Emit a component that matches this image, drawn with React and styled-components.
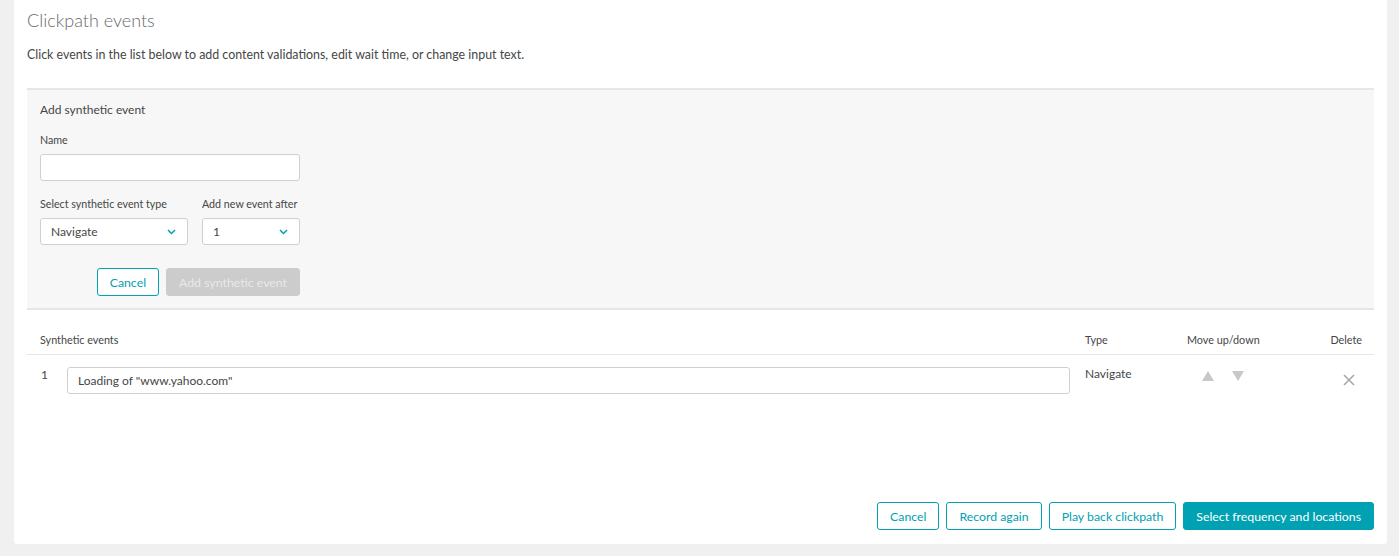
import React from "react";
import styled, { createGlobalStyle } from "styled-components";

const Global = createGlobalStyle`
  html, body {
    margin: 0;
    padding: 0;
    background: #f0f0f0;
    font-family: Lato, "Open Sans", sans-serif;
    color: #454646;
  }
  * { box-sizing: border-box; }
`;

const Card = styled.div`
  margin: 0 12px 0 14px;
  height: 544px;
  background: #fff;
  border-radius: 0 0 3px 3px;
  padding: 8px 13px 0 13px;
  display: flex;
  flex-direction: column;
`;

const Title = styled.h1`
  margin: 0;
  font-size: 18px;
  line-height: 24px;
  font-weight: 300;
  color: #6a6a6a;
`;

const Intro = styled.p`
  margin: 11px 0 0;
  font-size: 12.4px;
  line-height: 24px;
`;

const Panel = styled.div`
  margin-top: 21px;
  background: #f7f7f7;
  border-top: 2px solid #e6e6e6;
  border-bottom: 2px solid #e6e6e6;
  padding: 11px 13px 12px;
  height: 222px;
`;

const PanelTitle = styled.div`
  font-size: 12px;
  line-height: 18px;
`;

const Label = styled.label`
  display: block;
  font-size: 10.7px;
  line-height: 14px;
  margin: ${(p) => p.$top || 0}px 0 7px;
`;

const TextInput = styled.div`
  width: ${(p) => p.$w || 260}px;
  height: 27px;
  background: #fff;
  border: 1px solid #d0d0d0;
  border-radius: 3px;
  font-size: 12px;
  line-height: 25px;
  padding: 0 10px;
  color: #454646;
`;

const Row = styled.div`
  display: flex;
  gap: 14px;
  margin-top: 16px;
`;

const Select = styled.div`
  width: ${(p) => p.$w}px;
  height: 27px;
  background: #fff;
  border: 1px solid #d0d0d0;
  border-radius: 3px;
  font-size: 12px;
  display: flex;
  align-items: center;
  justify-content: space-between;
  padding: 0 11px 0 10px;
  svg { display: block; }
`;

const Actions = styled.div`
  display: flex;
  gap: 7px;
  justify-content: flex-end;
  width: ${(p) => p.$w || "auto"};
  margin-top: ${(p) => p.$top || 0}px;
`;

const Button = styled.button`
  height: 28px;
  padding: 0 12px;
  font-family: inherit;
  font-size: 12.3px;
  border-radius: 3px;
  cursor: pointer;
  border: 1px solid ${(p) => (p.$disabled ? "#cccccc" : "#00a1b2")};
  background: ${(p) => (p.$primary ? "#00a1b2" : p.$disabled ? "#cccccc" : "#fff")};
  color: ${(p) => (p.$primary ? "#fff" : p.$disabled ? "#e8e8e8" : "#00a1b2")};
`;

const Table = styled.div`
  margin-top: 23px;
`;

const Grid = styled.div`
  display: grid;
  grid-template-columns: 27px 1fr 102px 130px 45px;
  padding: 0 12px 0 13px;
`;

const Head = styled(Grid)`
  font-size: 10.8px;
  line-height: 14px;
  padding-bottom: 7px;
  border-bottom: 1px solid #e6e6e6;
  span:nth-child(2) { grid-column: 1 / 3; }
`;

const Body = styled(Grid)`
  padding-top: 12px;
  font-size: 12px;
  align-items: start;
`;

const Num = styled.div`
  font-size: 12px;
  line-height: 14px;
  padding: 1px 0 0 1px;
`;

const Cell = styled.div`
  line-height: 14px;
  padding-top: ${(p) => p.$pt || 0}px;
  padding-right: ${(p) => p.$pr || 0}px;
  text-align: ${(p) => p.$align || "left"};
`;

const Arrows = styled.div`
  display: flex;
  gap: 18px;
  padding: 4px 0 0 15px;
`;

const Spacer = styled.div`
  flex: 1;
`;

const Footer = styled(Actions)`
  margin-bottom: 14px;
`;

const Chevron = () => (
  <svg width="9" height="6" viewBox="0 0 9 6">
    <path d="M1 1 L4.5 4.5 L8 1" fill="none" stroke="#00a1b2" strokeWidth="1.5" />
  </svg>
);

const Tri = ({ down }) => (
  <svg width="12" height="10" viewBox="0 0 12 10">
    <path d={down ? "M0 0 H12 L6 10 Z" : "M0 10 H12 L6 0 Z"} fill="#c8c8c8" />
  </svg>
);

const Cross = () => (
  <svg width="12" height="12" viewBox="0 0 12 12">
    <path d="M1 1 L11 11 M11 1 L1 11" stroke="#a8a8a8" strokeWidth="1.6" />
  </svg>
);

export default function App() {
  return (
    <>
      <Global />
      <Card>
        <Title>Clickpath events</Title>
        <Intro>
          Click events in the list below to add content validations, edit wait time, or change input text.
        </Intro>
        <Panel>
          <PanelTitle>Add synthetic event</PanelTitle>
          <Label $top={14}>Name</Label>
          <TextInput />
          <Row>
            <div>
              <Label>Select synthetic event type</Label>
              <Select $w={148}>
                Navigate
                <Chevron />
              </Select>
            </div>
            <div>
              <Label>Add new event after</Label>
              <Select $w={98}>
                1
                <Chevron />
              </Select>
            </div>
          </Row>
          <Actions $w="260px" $top={23}>
            <Button>Cancel</Button>
            <Button $disabled>Add synthetic event</Button>
          </Actions>
        </Panel>
        <Table>
          <Head>
            <span />
            <span>Synthetic events</span>
            <span>Type</span>
            <span>Move up/down</span>
            <Cell $align="right" as="span">Delete</Cell>
          </Head>
          <Body>
            <Num>1</Num>
            <TextInput $w={1003}>Loading of "www.yahoo.com"</TextInput>
            <Cell>Navigate</Cell>
            <Arrows>
              <Tri />
              <Tri down />
            </Arrows>
            <Cell $align="right" $pt={7} $pr={7}>
              <Cross />
            </Cell>
          </Body>
        </Table>
        <Spacer />
        <Footer>
          <Button>Cancel</Button>
          <Button>Record again</Button>
          <Button>Play back clickpath</Button>
          <Button $primary>Select frequency and locations</Button>
        </Footer>
      </Card>
    </>
  );
}
